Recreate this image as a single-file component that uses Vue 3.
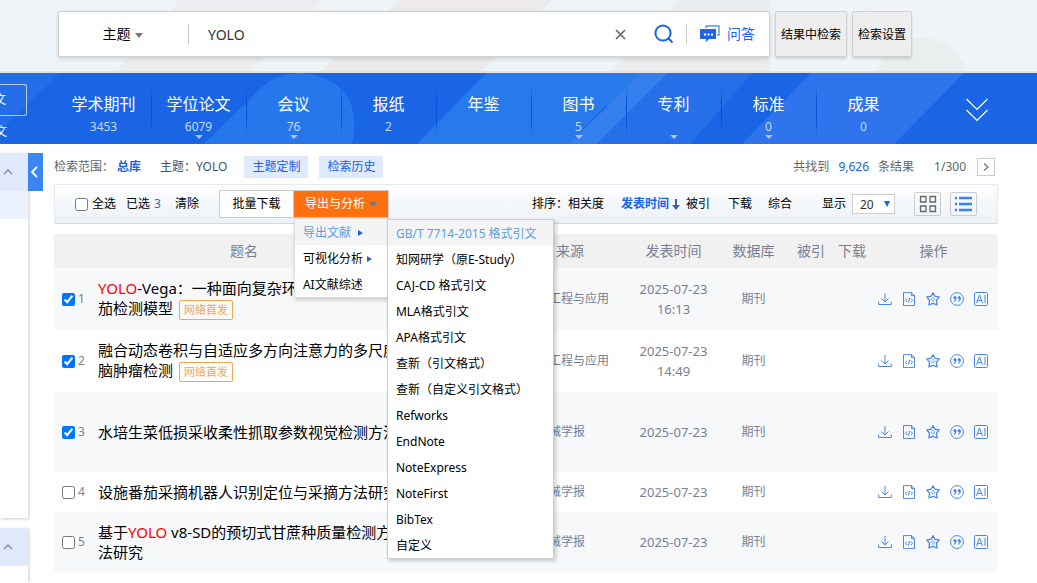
<script setup>
import { ref } from 'vue'

const keyword = ref('YOLO')
const pageSize = ref('20')
const allSelected = ref(false)

const categories = [
  { name: '学术期刊', count: '3453', more: false },
  { name: '学位论文', count: '6079', more: true },
  { name: '会议', count: '76', more: true },
  { name: '报纸', count: '2', more: false },
  { name: '年鉴', count: '', more: false },
  { name: '图书', count: '5', more: true },
  { name: '专利', count: '', more: true },
  { name: '标准', count: '0', more: true },
  { name: '成果', count: '0', more: false },
]

const exportFormats = [
  'GB/T 7714-2015 格式引文',
  '知网研学（原E-Study）',
  'CAJ-CD 格式引文',
  'MLA格式引文',
  'APA格式引文',
  '查新（引文格式）',
  '查新（自定义引文格式）',
  'Refworks',
  'EndNote',
  'NoteExpress',
  'NoteFirst',
  'BibTex',
  '自定义',
]

const rows = ref([
  { checked: true, hit: 'YOLO', before: '', line1: '-Vega：一种面向复杂环', line2: '茄检测模型', tag: true, source: '计算机工程与应用', date: '2025-07-23', time: '16:13', size: 'double' },
  { checked: true, hit: '', before: '', line1: '融合动态卷积与自适应多方向注意力的多尺度', line2: '脑肿瘤检测', tag: true, source: '计算机工程与应用', date: '2025-07-23', time: '14:49', size: 'double' },
  { checked: true, hit: '', before: '', line1: '水培生菜低损采收柔性抓取参数视觉检测方法', line2: '', tag: false, source: '农业机械学报', date: '2025-07-23', time: '', size: 'tall' },
  { checked: false, hit: '', before: '', line1: '设施番茄采摘机器人识别定位与采摘方法研究', line2: '', tag: false, source: '农业机械学报', date: '2025-07-23', time: '', size: 'single' },
  { checked: false, hit: 'YOLO', before: '基于', line1: ' v8-SD的预切式甘蔗种质量检测方', line2: '法研究', tag: false, source: '农业机械学报', date: '2025-07-23', time: '', size: 'single' },
])
</script>

<template>
  <div class="page">
    <header class="top">
      <svg class="decor" viewBox="0 0 1037 72" preserveAspectRatio="xMidYMid slice" aria-hidden="true">
        <path d="M180 0H322L250 72H116z" fill="#ededf0" />
        <path d="M400 0H553L481 72H320z" fill="#eceaea" />
        <path d="M680 0H770V72H610z" fill="#ebeced" />
        <path d="M870 0H1037V72H856z" fill="#f0f3f8" />
        <circle cx="922" cy="84" r="46" fill="#ebeeee" />
      </svg>
      <form class="search" role="search" @submit.prevent>
        <button type="button" class="field-pick">主题<i class="tri"></i></button>
        <input v-model="keyword" class="keyword" type="text" aria-label="检索词" />
        <button type="button" class="clear" aria-label="清空">
          <svg width="11" height="11" viewBox="0 0 11 11"><path d="M1 1l9 9M10 1l-9 9" stroke="#666" stroke-width="1.6" fill="none" /></svg>
        </button>
        <button type="submit" class="go" aria-label="检索">
          <svg width="20" height="20" viewBox="0 0 20 20"><circle cx="9" cy="9" r="7.6" stroke="#1463f3" stroke-width="2" fill="none" /><path d="M14 14l4.5 4.5" stroke="#1463f3" stroke-width="2" /></svg>
        </button>
        <a href="#" class="ask">
          <svg width="20" height="18" viewBox="0 0 20 18"><path d="M6 3V1h13v9h-2" fill="none" stroke="#5d92f1" stroke-width="1.4" /><path d="M1 4h14.5q.5 0 .5.500v9q0 .5-.5.500H9l-3 3v-3H1q-1 0-1-1V5q0-1 1-1z" fill="#1f65e4" /><path d="M4 8.500h2v2H4zM7.500 8.500h2v2h-2zM11 8.500h2v2h-2z" fill="#fff" /></svg>
          问答
        </a>
      </form>
      <button type="button" class="side-btn wide">结果中检索</button>
      <button type="button" class="side-btn">检索设置</button>
    </header>

    <nav class="cats">
      <svg class="decor" viewBox="0 0 1037 71" preserveAspectRatio="xMidYMid slice" aria-hidden="true">
        <path d="M0 0H60L0 58z" fill="#246de9" />
        <path d="M204 71L262 14Q278 0 302 0Q352 6 354 48Q355 60 352 71z" fill="#2777ec" />
        <path d="M417 71L486 0H638L568 71z" fill="#277aec" />
        <path d="M570 71L606 35L612 0H668L597 71z" fill="#277aec" />
        <path d="M568 71L606 35L622 18L640 0H640L668 0L597 71z" fill="#3580ee" />
        <path d="M597 71L668 0H752L690 71z" fill="#266fe8" />
        <path d="M742 71L811 0H964L894 71z" fill="#2f74ed" />
      </svg>
      <div class="langs">
        <button type="button" class="lang boxed">中文</button>
        <button type="button" class="lang">外文</button>
      </div>
      <a v-for="c in categories" :key="c.name" href="#" class="cat">
        <span class="cat-name">{{ c.name }}</span>
        <span class="cat-count">{{ c.count }}</span>
        <i v-if="c.more" class="cat-more"></i>
      </a>
      <button type="button" class="expand" aria-label="展开">
        <svg width="22" height="24" viewBox="0 0 22 24"><path d="M.5 1L11 11.500L21.500 1M.5 12L11 22.500L21.500 12" fill="none" stroke="#fff" stroke-width="1.200" /></svg>
      </button>
    </nav>

    <div class="body">
      <aside class="facets">
        <section class="facet first">
          <button type="button" class="facet-head" aria-label="收起"><svg width="10" height="6" viewBox="0 0 10 6"><path d="M1 5l4-4 4 4" fill="none" stroke="#7b92c5" stroke-width="1.500" /></svg></button>
          <div class="facet-sub"></div>
        </section>
        <section class="facet">
          <button type="button" class="facet-head" aria-label="收起"><svg width="10" height="6" viewBox="0 0 10 6"><path d="M1 5l4-4 4 4" fill="none" stroke="#7b92c5" stroke-width="1.500" /></svg></button>
        </section>
      </aside>
      <button type="button" class="fold" aria-label="隐藏侧栏"><svg width="8" height="12" viewBox="0 0 8 12"><path d="M7 1L2 6l5 5" fill="none" stroke="#fff" stroke-width="1.800" /></svg></button>

      <main class="main">
        <div class="info">
          <span class="muted">检索范围：</span><b class="lib">总库</b>
          <span class="cond">主题：<span class="cond-word">YOLO</span></span>
          <button type="button" class="chip">主题定制</button>
          <button type="button" class="chip">检索历史</button>
          <span class="total">共找到<em>9,626</em>条结果</span>
          <span class="pages">1/300</span>
          <button type="button" class="next" aria-label="下一页"><svg width="6" height="8" viewBox="0 0 6 8"><path d="M1 .5L5 4L1 7.500" fill="none" stroke="#777" stroke-width="1.300" /></svg></button>
        </div>

        <div class="toolbar">
          <label class="all"><input v-model="allSelected" type="checkbox" />全选</label>
          <span class="picked">已选<em>3</em></span>
          <a href="#" class="reset">清除</a>
          <button type="button" class="batch">批量下载</button>
          <div class="export">
            <button type="button" class="export-btn">导出与分析<i class="tri"></i></button>
            <div class="menu">
              <a href="#" class="menu-item active">导出文献<i class="arrow"></i></a>
              <a href="#" class="menu-item">可视化分析<i class="arrow near"></i></a>
              <a href="#" class="menu-item">AI文献综述</a>
              <div class="submenu">
                <a v-for="(f, i) in exportFormats" :key="f" href="#" class="menu-item" :class="{ active: i === 0 }">{{ f }}</a>
              </div>
            </div>
          </div>
          <div class="sort">
            <span>排序：</span>
            <a href="#" class="s-rel">相关度</a>
            <a href="#" class="s-date">发表时间<svg width="8" height="11" viewBox="0 0 8 11"><path d="M4 0v9" stroke="#3a63ad" stroke-width="2" /><path d="M0 6h8L4 11z" fill="#3a63ad" /></svg></a>
            <a href="#" class="s-cite">被引</a>
            <a href="#" class="s-down">下载</a>
            <a href="#">综合</a>
          </div>
          <label class="show">显示
            <span class="size"><select v-model="pageSize"><option>10</option><option>20</option><option>50</option></select></span>
          </label>
          <button type="button" class="view" aria-label="详情视图"><svg width="18" height="18" viewBox="0 0 18 18"><path d="M1.500 1.500h5.500v5.500h-5.500zM11 1.500h5.500v5.500h-5.500zM1.500 11h5.500v5.500h-5.500zM11 11h5.500v5.500h-5.500z" fill="none" stroke="#666" stroke-width="1.300" /></svg></button>
          <button type="button" class="view last" aria-label="列表视图"><svg width="18" height="16" viewBox="0 0 18 16"><path d="M0 2h2M4 2h13M0 8h2M4 8h13M0 14h2M4 14h13" stroke="#3b82f6" stroke-width="2.400" /></svg></button>
        </div>

        <table class="results">
          <colgroup>
            <col class="c-check" /><col /><col class="c-author" /><col class="c-source" /><col class="c-date" /><col class="c-db" /><col class="c-cite" /><col class="c-down" /><col class="c-ops" />
          </colgroup>
          <thead>
            <tr><th></th><th>题名</th><th></th><th>来源</th><th>发表时间</th><th>数据库</th><th>被引</th><th>下载</th><th>操作</th></tr>
          </thead>
          <tbody>
            <tr v-for="(r, i) in rows" :key="i" :class="r.size">
              <td><label class="pick"><input v-model="r.checked" type="checkbox" />{{ i + 1 }}</label></td>
              <td class="title">
                <a href="#">{{ r.before }}<mark v-if="r.hit">{{ r.hit }}</mark>{{ r.line1 }}<template v-if="r.line2"><br />{{ r.line2 }}</template></a>
                <span v-if="r.tag" class="tag">网络首发</span>
              </td>
              <td></td>
              <td class="source">{{ r.source }}</td>
              <td class="date">{{ r.date }}<template v-if="r.time"><br />{{ r.time }}</template></td>
              <td class="center">期刊</td>
              <td></td>
              <td></td>
              <td>
                <div class="ops">
                  <a href="#" aria-label="下载"><svg width="14" height="14" viewBox="0 0 14 14"><path d="M7 1v9M3.500 6.500L7 10l3.500-3.500M.7 9.500v3h12.600v-3" /></svg></a>
                  <a href="#" aria-label="阅读"><svg width="14" height="14" viewBox="0 0 14 14"><path d="M1.500.6h8l3 3v10h-11zM9.500.6v3h3M5 6.500L3.500 8.300L5 10M9 6.500l1.500 1.800L9 10M7.600 6L6.400 10.600" /></svg></a>
                  <a href="#" aria-label="收藏"><svg width="14" height="14" viewBox="0 0 14 14"><path d="M7 .8l1.900 3.400 4.300.8-2.700 3.200.5 4.600L7 11.500l-4 1.300.5-4.600L.8 5l4.300-.8z" stroke-width="1.300" /><path d="M7 5v1.500M4.800 7l1.400.5M9.200 7l-1.400.5M6 9.500l.5-1M8 9.500l-.5-1" /></svg></a>
                  <a href="#" aria-label="引用"><svg width="14" height="14" viewBox="0 0 14 14"><circle cx="7" cy="7" r="6.400" /><path d="M4 9.500q2-1 2-3.500M8.300 9.500q2-1 2-3.500" stroke-width="1.200" /><circle cx="4.900" cy="5.700" r="1.100" fill="#3a78e8" /><circle cx="9.200" cy="5.700" r="1.100" fill="#3a78e8" /></svg></a>
                  <a href="#" aria-label="AI阅读"><svg width="14" height="14" viewBox="0 0 14 14"><rect x=".5" y=".5" width="13" height="13" rx="1" /><path d="M2.500 11L5.500 3l3 8M3.500 8.500h4M11 3v8" /></svg></a>
                </div>
              </td>
            </tr>
          </tbody>
        </table>
      </main>
    </div>
  </div>
</template>

<style>
body {
  margin: 0;
  background: #fff;
}
</style>

<style scoped>
.page {
  font-family: "Noto Sans", "Noto Sans CJK SC", sans-serif;
  font-size: 12px;
  line-height: 20px;
  color: #000;
}
.page * {
  box-sizing: border-box;
}
button,
input,
select {
  font: inherit;
  color: inherit;
  padding: 0;
  margin: 0;
  border: 0;
  background: none;
}
a {
  color: inherit;
  text-decoration: none;
}
em {
  font-style: normal;
}
svg {
  display: block;
}
.decor {
  position: absolute;
  inset: 0;
  width: 100%;
  height: 100%;
}
.tri {
  display: inline-block;
  margin-left: 4px;
  vertical-align: middle;
  border: 4px solid transparent;
  border-top: 5px solid #777;
  border-bottom: 0;
}

/* search header */
.top {
  position: relative;
  display: flex;
  align-items: center;
  padding: 11px 125px 14px 58px;
  background: #eff4f9;
  border-bottom: 2px solid #e1e3e6;
}
.search {
  position: relative;
  flex: 1;
  display: flex;
  align-items: center;
  height: 46px;
  padding-right: 14px;
  font-size: 14px;
  background: #fff;
  border: 1px solid #d0d0d0;
  border-radius: 2px;
  box-shadow: 0 2px 4px #0002;
}
.field-pick {
  width: 130px;
  height: 20px;
  padding-right: 2px;
  border-right: 1px solid #c8c8c8;
}
.keyword {
  flex: 1;
  min-width: 0;
  height: 30px;
  padding-left: 19px;
  color: #333;
  outline: 0;
}
.clear {
  width: 11px;
  margin-right: 28px;
}
.go {
  width: 20px;
  margin-right: 12px;
}
.ask {
  display: flex;
  align-items: center;
  gap: 7px;
  height: 20px;
  padding-left: 13px;
  border-left: 1px solid #c8c8c8;
  color: #1a65e8;
}
.side-btn {
  position: relative;
  width: 60px;
  height: 46px;
  margin-left: 5px;
  padding-top: 2px;
  background: #eee;
  border: 1px solid #d0d0d0;
  border-radius: 2px;
  box-shadow: 0 2px 3px #0002;
  white-space: nowrap;
}
.side-btn.wide {
  width: 72px;
}

/* category bar */
.cats {
  position: relative;
  display: flex;
  height: 71px;
  background: #1a65e6;
  color: #fff;
}
.langs {
  position: relative;
  width: 56px;
  padding-top: 11px;
}
.lang {
  display: block;
  width: 27px;
  height: 32px;
  padding-right: 20px;
  direction: rtl;
  white-space: nowrap;
  overflow: hidden;
}
.lang.boxed {
  border: 1px solid #b5cdf7;
  border-left: 0;
  border-radius: 0 3px 3px 0;
}
.cat {
  position: relative;
  width: 95px;
  padding-top: 19px;
  text-align: center;
}
.cat + .cat::before {
  content: "";
  position: absolute;
  left: 0;
  top: 13px;
  width: 1px;
  height: 50px;
  background: linear-gradient(#0b4fd600, #0b4fd6 30%, #0b4fd6 70%, #0b4fd600);
}
.cat-name {
  display: block;
  font-size: 16px;
  line-height: 24px;
}
.cat-count {
  display: block;
  color: #c3d8fa;
  line-height: 22px;
}
.cat-more {
  position: absolute;
  left: 50%;
  bottom: 5px;
  margin-left: -4px;
  border: 4px solid transparent;
  border-top-color: #a9c6f8;
  border-bottom: 0;
}
.expand {
  position: relative;
  margin: 0 auto 0 55px;
  padding-top: 3px;
}

/* left facets */
.body {
  display: flex;
  align-items: stretch;
  padding-top: 9px;
}
.facets {
  display: flex;
  flex-direction: column;
  width: 28px;
}
.facet {
  flex: 1;
  background: #fff;
  box-shadow: 1px 1px 3px #0003;
}
.facet.first {
  flex: none;
  height: 365px;
  margin-bottom: 10px;
}
.facet-head {
  display: block;
  width: 100%;
  height: 38px;
  padding-left: 3px;
  background: #e1eafc;
}
.facet-sub {
  height: 28px;
  background: #ebf1fd;
}
.fold {
  position: relative;
  display: flex;
  align-items: center;
  justify-content: center;
  width: 15px;
  height: 38px;
  padding-right: 3px;
  background: #3b86f3;
}

/* result summary */
.main {
  flex: 1;
  min-width: 0;
  padding: 0 39px 10px 11px;
}
.info {
  display: flex;
  align-items: center;
  height: 31px;
  padding: 0 3px 3px 0;
}
.muted {
  color: #666;
}
.lib {
  margin: 0 19px 0 3px;
  color: #1a65e8;
}
.cond {
  margin-right: 17px;
  color: #42526e;
}
.chip {
  width: 64px;
  height: 22px;
  margin-right: 11px;
  background: #e1eafc;
  color: #1a5fe0;
}
.total {
  margin-left: auto;
  color: #666;
}
.total em {
  margin: 0 9px;
  color: #1a5fe0;
}
.pages {
  margin: 0 11px 0 20px;
  color: #666;
}
.next {
  display: flex;
  align-items: center;
  justify-content: center;
  width: 18px;
  height: 18px;
  border: 1px solid #ccc;
}

/* toolbar */
.toolbar {
  display: flex;
  align-items: center;
  height: 40px;
  padding: 0 20px;
  background: linear-gradient(#fcfdfe, #edf2f7);
  border: 1px solid #e6eaee;
  border-bottom-color: #d3dbe4;
}
.all {
  display: flex;
  align-items: center;
  gap: 4px;
}
input[type="checkbox"] {
  width: 13px;
  height: 13px;
}
.picked {
  margin: 0 14px 0 10px;
}
.picked em {
  margin-left: 4px;
  color: #2f66c8;
}
.reset {
  margin-right: 20px;
}
.batch {
  width: 75px;
  height: 28px;
  background: #fff;
  border: 1px solid #ccc;
}
.export {
  position: relative;
}
.export-btn {
  width: 95px;
  height: 28px;
  background: #ff7010;
  border: 1px solid #d5d0cb;
  border-left: 0;
  color: #fff;
  white-space: nowrap;
}
.menu {
  position: absolute;
  z-index: 2;
  top: 28px;
  left: 0;
  width: 95px;
  background: #fff;
  border: 1px solid #ddd;
  box-shadow: 1px 2px 4px #0003;
}
.submenu {
  position: absolute;
  top: 0;
  left: 92px;
  width: 167px;
  background: #fff;
  border: 1px solid #ccc;
  box-shadow: 2px 2px 4px #0003;
}
.menu-item {
  display: flex;
  align-items: center;
  height: 26px;
  padding: 2px 0 0 8px;
  white-space: nowrap;
}
.menu-item.active {
  background: #f4f4f4;
  color: #5a9fe2;
}
.arrow {
  margin-left: 7px;
  border: 3px solid transparent;
  border-left: 5px solid #2164c8;
  border-right: 0;
}
.arrow.near {
  margin-left: 4px;
}
.sort {
  display: flex;
  margin-left: auto;
}
.s-rel {
  margin-right: 17px;
}
.s-date {
  display: flex;
  align-items: center;
  gap: 3px;
  margin-right: 6px;
  font-weight: bold;
  color: #1463f3;
}
.s-cite {
  margin-right: 18px;
}
.s-down {
  margin-right: 16px;
}
.show {
  display: flex;
  align-items: center;
  gap: 6px;
  margin: 0 19px 0 30px;
}
.size {
  position: relative;
}
.size::after {
  content: "";
  position: absolute;
  right: 5px;
  top: 7px;
  border: 3px solid transparent;
  border-top: 6px solid #2164c8;
  border-bottom: 0;
  pointer-events: none;
}
select {
  display: block;
  appearance: none;
  width: 43px;
  height: 20px;
  padding-left: 7px;
  border: 1px solid #ccc;
  background: #fff;
  color: #333;
}
.view {
  display: flex;
  align-items: center;
  justify-content: center;
  width: 27px;
  height: 24px;
  border: 1px solid #ccc;
  border-radius: 2px;
}
.view.last {
  margin-left: 9px;
}

/* results */
.results {
  width: 100%;
  margin-top: 10px;
  table-layout: fixed;
  border-collapse: collapse;
  color: #797f93;
}
.c-check { width: 44px; }
.c-author { width: 123px; }
.c-source { width: 114px; }
.c-date { width: 93px; }
.c-db { width: 67px; }
.c-cite { width: 48px; }
.c-down { width: 34px; }
.c-ops { width: 129px; }
th {
  height: 34px;
  padding: 0;
  background: #f1f1f1;
  font-size: 14px;
  font-weight: normal;
}
td {
  height: 40px;
  padding: 0;
}
tbody tr:nth-child(odd) {
  background: #f6f8fa;
}
.double td {
  height: 62px;
}
.tall td {
  height: 80px;
}
tbody tr:last-child td {
  height: 60px;
}
.pick {
  display: flex;
  align-items: center;
  gap: 3px;
  padding-left: 8px;
}
.title {
  color: #000;
  font-size: 15px;
  white-space: nowrap;
}
mark {
  background: none;
  color: #f00;
}
.tag {
  display: inline-block;
  height: 20px;
  margin-left: 6px;
  padding: 0 4px;
  border: 1px solid #f3a64b;
  border-radius: 2px;
  font-size: 11px;
  line-height: 18px;
  color: #f3a64b;
}
.source {
  white-space: nowrap;
}
.date {
  text-align: center;
  font-size: 13px;
}
.center {
  text-align: center;
}
.ops {
  display: flex;
  justify-content: center;
  gap: 10px;
  padding-right: 2px;
}
.ops svg {
  fill: none;
  stroke: #4a86ea;
  stroke-width: 1;
}
</style>
